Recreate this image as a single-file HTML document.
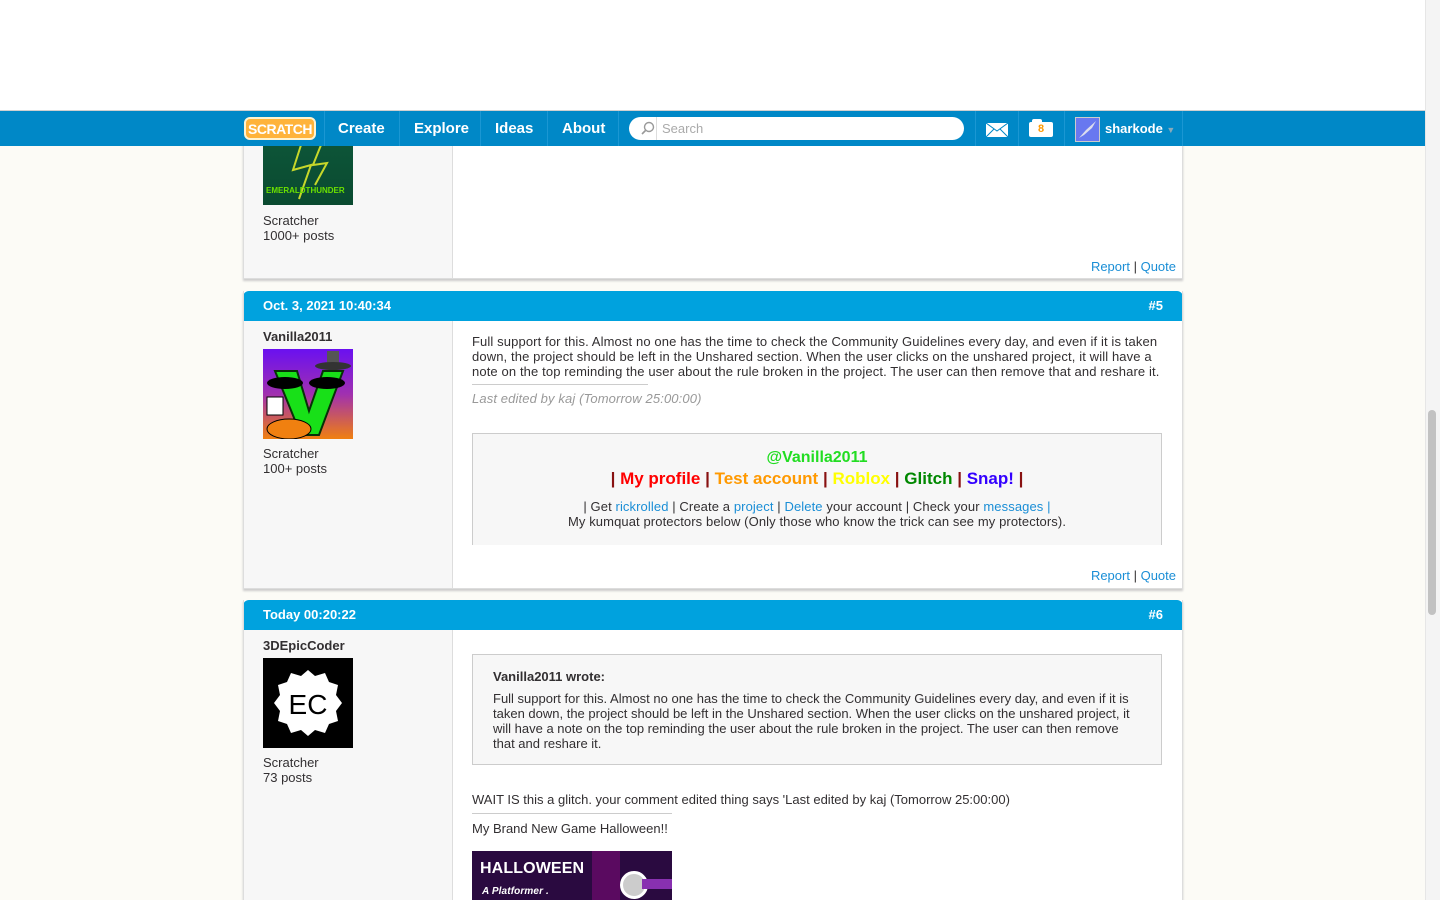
<!DOCTYPE html>
<html><head><meta charset="utf-8"><style>
*{box-sizing:border-box;margin:0;padding:0}
html,body{width:1440px;height:900px;overflow:hidden}
body{background:#fcfbf6;font-family:"Liberation Sans",Arial,sans-serif;font-size:13px;color:#322f31;position:relative}
.top{position:absolute;left:0;top:0;width:1425px;height:110px;background:#fff;z-index:4}
.nav{position:absolute;left:0;top:110px;width:1425px;height:36px;background:#0088c7;border-top:1px solid #d0d0d0;z-index:5}
.nav a{position:absolute;top:0;height:35px;line-height:35px;color:#fff;font-size:15px;font-weight:bold;text-decoration:none}
.sep{position:absolute;top:0;width:1px;height:35px;background:#1b97d3}
.sb{position:absolute;right:0;top:0;width:15px;height:900px;background:#f4f4f4;border-left:1px solid #e6e6e6}
.thumb{position:absolute;left:1428px;top:410px;width:8px;height:205px;border-radius:4px;background:#c2c2c2}
.post{position:absolute;left:243px;width:940px;background:#fff;box-shadow:0 2px 2px #ccc;border:1px solid #ddd;border-top:none;overflow:hidden}
.hd{height:30px;background:#00a2de;color:#fff;font-weight:bold;line-height:30px;padding:0 20px;border-radius:6px 6px 0 0;margin:0 -1px}
.hd span{float:right}
.left{position:absolute;left:0;top:0;width:209px;bottom:0;background:#f7f7f7;border-right:1px solid #ddd;padding:8px 19px}
.left b{display:block;margin-bottom:5px}
.av{width:90px;height:90px;margin-bottom:7px}
.right{position:absolute;left:228px;right:20px;letter-spacing:0.12px}
.a{color:#1a8ed6}
.rq{position:absolute;right:6px;color:#1a8ed6}
.rq i{color:#322f31;font-style:normal}
</style></head><body>
<div class="top"></div>

<!-- post 4 (partial) -->
<div class="post" style="top:110px;height:169px">
 <div class="left" style="padding-top:5px">
  <div class="av" style="background:linear-gradient(#0f5a3c,#0a4a30);position:relative;overflow:hidden;margin-bottom:8px">
   <svg width="90" height="90" style="position:absolute;left:0;top:0"><polyline points="38,30 30,55 48,50 36,84" fill="none" stroke="#c8d82a" stroke-width="2"/><polyline points="58,30 50,50 64,48 52,70" fill="none" stroke="#c8d82a" stroke-width="2"/></svg>
   <div style="position:absolute;top:71px;left:3px;font-size:8px;font-weight:bold;color:#6be000">EMERALDTHUNDER</div>
  </div>
  Scratcher<br>1000+ posts
 </div>
 <div class="rq" style="top:149px">Report <i>|</i> Quote</div>
</div>

<!-- post 5 -->
<div class="post" style="top:291px;height:298px">
 <div class="hd">Oct. 3, 2021 10:40:34<span>#5</span></div>
 <div style="position:relative;height:268px">
 <div class="left"><b>Vanilla2011</b>
  <div class="av" style="background:linear-gradient(#6a10f0,#a030b0 50%,#f08010);position:relative;overflow:hidden">
   <svg width="90" height="90"><path d="M12 22 L34 22 L46 62 L60 22 L80 22 L56 86 L38 86Z" fill="#18e018" stroke="#083008" stroke-width="2"/><ellipse cx="22" cy="34" rx="18" ry="6" fill="#000"/><ellipse cx="64" cy="34" rx="18" ry="6" fill="#000"/><rect x="64" y="2" width="12" height="14" fill="#555"/><ellipse cx="70" cy="17" rx="18" ry="4" fill="#333"/><rect x="4" y="48" width="16" height="18" fill="#fff" stroke="#000"/><ellipse cx="26" cy="80" rx="22" ry="10" fill="#f08010" stroke="#000"/></svg>
  </div>
  Scratcher<br>100+ posts</div>
 <div class="right" style="top:13px;line-height:15px">
  Full support for this. Almost no one has the time to check the Community Guidelines every day, and even if it is taken down, the project should be left in the Unshared section. When the user clicks on the unshared project, it will have a note on the top reminding the user about the rule broken in the project. The user can then remove that and reshare it.
  <div style="width:176px;border-top:1px solid #ccc;margin-top:5px"></div>
  <div style="color:#999;font-style:italic;margin-top:6px">Last edited by kaj (Tomorrow 25:00:00)</div>
  <div style="margin-top:27px;height:112px;background:#f7f7f7;border:1px solid #ccc;border-bottom:none;text-align:center;padding-top:14px;letter-spacing:0">
   <div style="color:#22dd22;font-weight:bold;font-size:16px;line-height:20px">@Vanilla2011</div>
   <div style="font-weight:bold;font-size:17px;line-height:22px"><span style="color:#811">|</span> <span style="color:#f00">My profile</span> <span style="color:#811">|</span> <span style="color:#f90">Test account</span> <span style="color:#811">|</span> <span style="color:#ff0">Roblox</span> <span style="color:#811">|</span> <span style="color:#080">Glitch</span> <span style="color:#811">|</span> <span style="color:#30f">Snap!</span> <span style="color:#811">|</span></div>
   <div style="margin-top:9px;letter-spacing:0.1px">| Get <span class="a">rickrolled</span> | Create a <span class="a">project</span> | <span class="a">Delete</span> your account | Check your <span class="a">messages</span> <span class="a">|</span><br>My kumquat protectors below (Only those who know the trick can see my protectors).</div>
  </div>
 </div>
 <div class="rq" style="top:247px">Report <i>|</i> Quote</div>
 </div>
</div>

<!-- post 6 -->
<div class="post" style="top:600px;height:320px">
 <div class="hd">Today 00:20:22<span>#6</span></div>
 <div style="position:relative;height:290px">
 <div class="left"><b>3DEpicCoder</b>
  <div class="av" style="background:#000;position:relative">
   <svg width="90" height="90"><polygon points="45,12 52,18 62,15 66,24 75,27 73,37 79,45 73,53 75,63 66,66 62,75 52,72 45,78 38,72 28,75 24,66 15,63 17,53 11,45 17,37 15,27 24,24 28,15 38,18" fill="#fff"/><text x="45" y="56" text-anchor="middle" font-family="Liberation Sans" font-size="28" fill="#000">EC</text></svg>
  </div>
  Scratcher<br>73 posts</div>
 <div class="right" style="top:24px;line-height:15px">
  <div style="background:#f7f7f7;border:1px solid #ccc;padding:14px 20px 13px;letter-spacing:0">
   <b style="display:block;margin-bottom:7px">Vanilla2011 wrote:</b>
   Full support for this. Almost no one has the time to check the Community Guidelines every day, and even if it is taken down, the project should be left in the Unshared section. When the user clicks on the unshared project, it will have a note on the top reminding the user about the rule broken in the project. The user can then remove that and reshare it.
  </div>
  <div style="margin-top:27px;letter-spacing:0">WAIT IS this a glitch. your comment edited thing says 'Last edited by kaj (Tomorrow 25:00:00)</div>
  <div style="width:200px;border-top:1px solid #ccc;margin-top:6px"></div>
  <div style="margin-top:7px;letter-spacing:0">My Brand New Game Halloween!!</div>
  <div style="margin-top:15px;width:200px;height:60px;background:#2a0a40;position:relative;overflow:hidden">
   <div style="position:absolute;left:8px;top:10px;color:#fff;font-weight:bold;font-size:16px">HALLOWEEN</div>
   <div style="position:absolute;left:10px;top:33px;color:#fff;font-style:italic;font-size:10px;font-weight:bold">A Platformer .</div>
   <div style="position:absolute;left:120px;top:0;width:28px;height:60px;background:#5a0a60"></div>
   <div style="position:absolute;left:148px;top:20px;width:28px;height:28px;border-radius:50%;background:#ccc;border:3px solid #fff"></div>
   <div style="position:absolute;left:170px;top:28px;width:30px;height:10px;background:#8830b0"></div>
  </div>
 </div>
 </div>
</div>

<div class="nav">
 <div style="position:absolute;left:244px;top:6px;width:72px;height:23px;background:#ffb33a;border-radius:6px;color:#fff;font-weight:bold;font-size:14px;line-height:21px;text-align:center;border:2px solid #fff3d0;letter-spacing:-0.5px">SCRATCH</div>
 <div class="sep" style="left:324px"></div>
 <a style="left:338px">Create</a><div class="sep" style="left:399px"></div>
 <a style="left:414px">Explore</a><div class="sep" style="left:480px"></div>
 <a style="left:495px">Ideas</a><div class="sep" style="left:547px"></div>
 <a style="left:562px">About</a><div class="sep" style="left:618px"></div>
 <div style="position:absolute;left:629px;top:6px;width:335px;height:23px;background:#fff;border-radius:12px">
  <svg width="28" height="23" style="position:absolute;left:4px;top:0"><circle cx="16" cy="10" r="4.5" fill="none" stroke="#999" stroke-width="1.4"/><line x1="12.5" y1="13.5" x2="9" y2="17" stroke="#999" stroke-width="1.6"/></svg>
  <div style="position:absolute;left:27px;top:0;width:1px;height:23px;background:#ddd"></div>
  <span style="position:absolute;left:33px;top:4px;color:#aaa;font-size:13px">Search</span>
 </div>
 <div class="sep" style="left:975px"></div>
 <svg width="22" height="14" style="position:absolute;left:986px;top:12px"><rect x="0" y="0" width="22" height="14" fill="#fff"/><polyline points="0,0 11,8 22,0" fill="none" stroke="#0088c7" stroke-width="1"/><line x1="0" y1="14" x2="8" y2="6" stroke="#0088c7"/><line x1="22" y1="14" x2="14" y2="6" stroke="#0088c7"/></svg>
 <div class="sep" style="left:1018px"></div>
 <div style="position:absolute;left:1029px;top:11px;width:24px;height:15px;background:#fff;border-radius:2px;color:#f90;font-size:11px;font-weight:bold;text-align:center;line-height:15px">8</div>
 <div style="position:absolute;left:1032px;top:8px;width:10px;height:4px;background:#fff;border-radius:2px 2px 0 0"></div>
 <div class="sep" style="left:1064px"></div>
 <div style="position:absolute;left:1075px;top:6px;width:25px;height:25px;background:#6878f0;border:1px solid #ccc"><svg width="23" height="23"><path d="M3 20 L10 12 L20 3 L16 10 L8 17Z" fill="#dde"/></svg></div>
 <a style="left:1105px;font-size:13px">sharkode <span style="color:#8ab;font-size:9px">▼</span></a>
 <div class="sep" style="left:1182px"></div>
</div>
<div class="sb"></div><div class="thumb"></div>
</body></html>
